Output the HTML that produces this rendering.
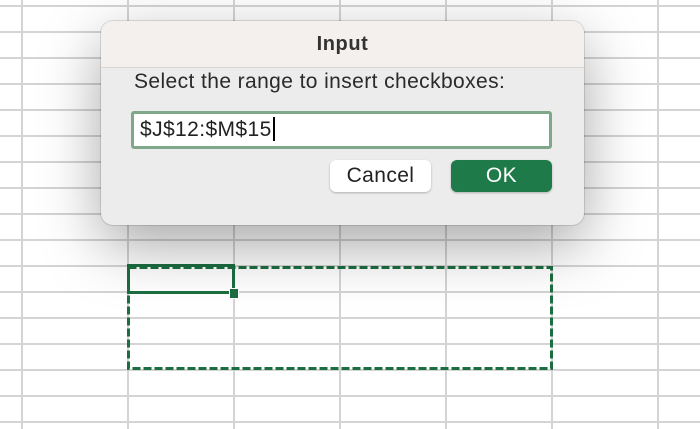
<!DOCTYPE html>
<html><head><style>
html,body{margin:0;padding:0;width:700px;height:429px;overflow:hidden;background:#fff;font-family:"Liberation Sans",sans-serif;}
.grid{position:absolute;inset:0;
background-image:linear-gradient(to right,#d4d4d4 0,#d4d4d4 2px,transparent 2px),linear-gradient(to bottom,#d4d4d4 0,#d4d4d4 2px,transparent 2px);
background-size:106px 26px,106px 26px;background-position:21px 0,0 5px;}
.dlg{position:absolute;left:101px;top:21px;width:483px;height:204px;border-radius:12px;background:#ececec;
box-shadow:0 20px 60px rgba(0,0,0,.35),0 0 0 1px rgba(0,0,0,.12);overflow:hidden;}
.title{height:46px;background:#f3f0ee;border-bottom:1px solid #d8d6d4;text-align:center;font-weight:bold;font-size:20px;letter-spacing:0.6px;line-height:46px;color:#333;}
.lbl{position:absolute;left:33px;top:49px;font-size:21px;letter-spacing:0.4px;color:#2a2a2a;}
.inp{position:absolute;left:30px;top:90px;width:409px;height:32px;border:3px solid #7fa88a;border-radius:3px;background:#fff;font-size:21px;letter-spacing:0.4px;line-height:32px;padding-left:6px;color:#222;box-sizing:content-box}
.inp span{display:inline-block;width:2px;height:24px;background:#000;vertical-align:-5px;margin-left:1px}
.btn{position:absolute;top:139px;height:32px;border-radius:6px;font-size:21px;letter-spacing:0.4px;line-height:32px;text-align:center;}
.c{left:229px;width:101px;background:#fff;color:#222;box-shadow:0 1px 2px rgba(0,0,0,.25)}
.o{left:350px;width:101px;background:#1e7a48;color:#fff;box-shadow:0 1px 2px rgba(0,0,0,.25)}
.hd{position:absolute;left:229px;top:288px;width:8px;height:9px;background:#1c6e41;border:1px solid #fff}
</style></head><body>
<div class="grid"></div>
<svg style="position:absolute;left:0;top:0" width="700" height="429">
<rect x="128.5" y="267.5" width="423" height="101" fill="none" stroke="#1c6e41" stroke-width="3" stroke-dasharray="8,3"/>
<rect x="128.5" y="265.5" width="105" height="27" fill="none" stroke="#1c6e41" stroke-width="3"/>
</svg>
<div class="hd"></div>
<div class="dlg">
<div class="title">Input</div>
<div class="lbl">Select the range to insert checkboxes:</div>
<div class="inp">$J$12:$M$15<span></span></div>
<div class="btn c">Cancel</div>
<div class="btn o">OK</div>
</div>
</body></html>
